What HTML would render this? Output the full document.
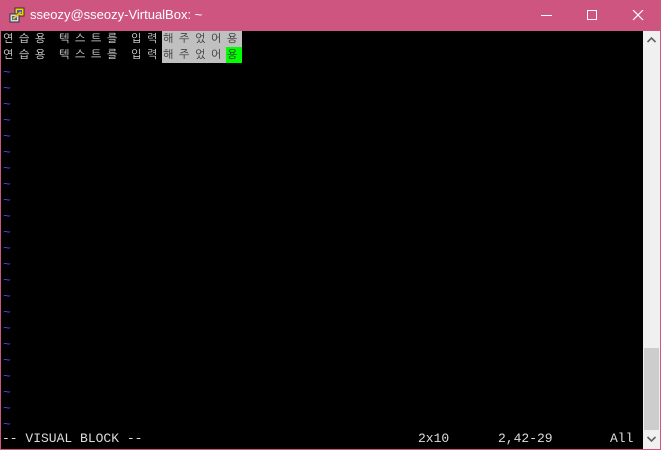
<!DOCTYPE html>
<html><head><meta charset="utf-8"><style>
*{margin:0;padding:0;box-sizing:border-box}
body{width:661px;height:450px;background:#cd5580;position:relative;overflow:hidden;font-family:"Liberation Sans",sans-serif}
.title{position:absolute;left:0;top:0;width:661px;height:31px;background:#cd5580}
.title .t{position:absolute;left:30px;top:7px;color:#fff;font-size:13px}
.term{position:absolute;left:1px;top:31px;width:642px;height:418px;background:#000}
.sb{position:absolute;left:643px;top:31px;width:17px;height:418px;background:#f0f0f0}
.thumb{position:absolute;left:1px;top:317px;width:15px;height:82px;background:#cdcdcd}
.row{position:absolute;left:0;height:16px;width:642px;font-family:"Liberation Sans","NanumGothic","Noto Sans CJK KR",sans-serif;font-size:11px;color:#ddd}
.k{position:absolute;width:16px;height:16px;line-height:16px;text-align:left;padding-left:1px}
.til{position:absolute;left:2px;color:#4848ff;font-family:"Liberation Mono",monospace;font-size:13px;line-height:16px;height:16px;margin-top:2px}
.st{position:absolute;top:400px;font-family:"Liberation Mono",monospace;font-size:13px;color:#ddd;line-height:16px;white-space:pre}
</style></head><body>
<div class="title">
<svg style="position:absolute;left:9px;top:7px" width="17" height="17" viewBox="0 0 17 17"><rect x="6" y="1" width="9" height="8" fill="#ffd000" stroke="#333"/><rect x="8" y="3" width="5" height="4" fill="#3060c0"/><rect x="1" y="7" width="9" height="8" fill="#ddd" stroke="#333"/><rect x="3" y="9" width="5" height="4" fill="#3060c0"/><path d="M4 12 L12 5" stroke="#f0c000" stroke-width="2"/></svg>
<div class="t">sseozy@sseozy-VirtualBox: ~</div>
<svg style="position:absolute;left:541px;top:10px" width="110" height="12"><path d="M0 5.5H11" stroke="#fff"/><rect x="46.5" y="0.5" width="9" height="9" fill="none" stroke="#fff"/><path d="M92 0L102 10M102 0L92 10" stroke="#fff" stroke-width="1.2"/></svg>
</div>
<div class="term">
<div style="position:absolute;left:161px;top:0;width:80px;height:32px;background:#c0c0c0"></div>
<div style="position:absolute;left:225px;top:16px;width:16px;height:16px;background:#00ff00"></div>
<div class="row" style="top:0">
<span class="k" style="left:1px">연</span><span class="k" style="left:17px">습</span><span class="k" style="left:33px">용</span><span class="k" style="left:57px">텍</span><span class="k" style="left:73px">스</span><span class="k" style="left:89px">트</span><span class="k" style="left:105px">를</span><span class="k" style="left:129px">입</span><span class="k" style="left:145px">력</span><span class="k" style="left:161px;color:#333">해</span><span class="k" style="left:177px;color:#333">주</span><span class="k" style="left:193px;color:#333">었</span><span class="k" style="left:209px;color:#333">어</span><span class="k" style="left:225px;color:#333">용</span>
</div>
<div class="row" style="top:16px">
<span class="k" style="left:1px">연</span><span class="k" style="left:17px">습</span><span class="k" style="left:33px">용</span><span class="k" style="left:57px">텍</span><span class="k" style="left:73px">스</span><span class="k" style="left:89px">트</span><span class="k" style="left:105px">를</span><span class="k" style="left:129px">입</span><span class="k" style="left:145px">력</span><span class="k" style="left:161px;color:#333">해</span><span class="k" style="left:177px;color:#333">주</span><span class="k" style="left:193px;color:#333">었</span><span class="k" style="left:209px;color:#333">어</span><span class="k" style="left:225px;color:#333">용</span>
</div>
<div class="til" style="top:32px">~</div><div class="til" style="top:48px">~</div><div class="til" style="top:64px">~</div><div class="til" style="top:80px">~</div><div class="til" style="top:96px">~</div><div class="til" style="top:112px">~</div><div class="til" style="top:128px">~</div><div class="til" style="top:144px">~</div><div class="til" style="top:160px">~</div><div class="til" style="top:176px">~</div><div class="til" style="top:192px">~</div><div class="til" style="top:208px">~</div><div class="til" style="top:224px">~</div><div class="til" style="top:240px">~</div><div class="til" style="top:256px">~</div><div class="til" style="top:272px">~</div><div class="til" style="top:288px">~</div><div class="til" style="top:304px">~</div><div class="til" style="top:320px">~</div><div class="til" style="top:336px">~</div><div class="til" style="top:352px">~</div><div class="til" style="top:368px">~</div><div class="til" style="top:384px">~</div>
<div class="st" style="left:1px">-- VISUAL BLOCK --</div>
<div class="st" style="left:417px">2x10</div>
<div class="st" style="left:497px">2,42-29</div>
<div class="st" style="left:609px">All</div>
</div>
<div class="sb">
<svg style="position:absolute;left:4px;top:6px" width="9" height="6"><path d="M0.5 5L4.5 1L8.5 5" stroke="#606060" stroke-width="1.6" fill="none"/></svg>
<div class="thumb"></div>
<svg style="position:absolute;left:4px;top:405px" width="9" height="6"><path d="M0.5 1L4.5 5L8.5 1" stroke="#606060" stroke-width="1.6" fill="none"/></svg>
</div>
</body></html>
